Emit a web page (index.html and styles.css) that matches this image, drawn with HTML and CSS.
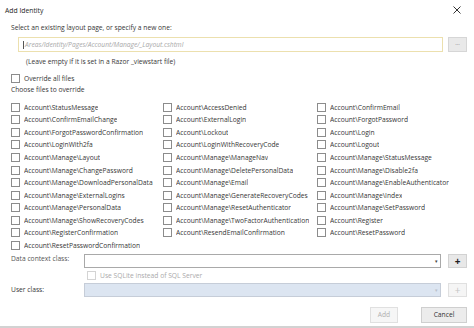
FILE: index.html
```html
<!DOCTYPE html>
<html>
<head>
<meta charset="utf-8">
<link rel="stylesheet" href="styles.css">
</head>
<body>
<div class="dialog">
  <div class="titlebar">
    <span class="title">Add Identity</span>
    <span class="close"><svg width="8" height="8" viewBox="0 0 8 8"><path d="M0.5 0.5L7.5 7.5M7.5 0.5L0.5 7.5" stroke="#333" stroke-width="1" fill="none"/></svg></span>
  </div>
  <div class="body">
    <div class="line prompt">Select an existing layout page, or specify a new one:</div>
    <div class="layout-row">
      <div class="layout-input"><span class="caret"></span><span class="placeholder">Areas/Identity/Pages/Account/Manage/_Layout.cshtml</span></div>
      <div class="browse">...</div>
    </div>
    <div class="line hint">(Leave empty if it is set in a Razor _viewstart file)</div>
    <div class="check-row override"><span class="cb"></span><span>Override all files</span></div>
    <div class="line choose">Choose files to override</div>
    <div class="files">
      <div class="file"><span class="cb"></span><span class="name">Account\StatusMessage</span></div>
      <div class="file"><span class="cb"></span><span class="name">Account\AccessDenied</span></div>
      <div class="file"><span class="cb"></span><span class="name">Account\ConfirmEmail</span></div>
      <div class="file"><span class="cb"></span><span class="name">Account\ConfirmEmailChange</span></div>
      <div class="file"><span class="cb"></span><span class="name">Account\ExternalLogin</span></div>
      <div class="file"><span class="cb"></span><span class="name">Account\ForgotPassword</span></div>
      <div class="file"><span class="cb"></span><span class="name">Account\ForgotPasswordConfirmation</span></div>
      <div class="file"><span class="cb"></span><span class="name">Account\Lockout</span></div>
      <div class="file"><span class="cb"></span><span class="name">Account\Login</span></div>
      <div class="file"><span class="cb"></span><span class="name">Account\LoginWith2fa</span></div>
      <div class="file"><span class="cb"></span><span class="name">Account\LoginWithRecoveryCode</span></div>
      <div class="file"><span class="cb"></span><span class="name">Account\Logout</span></div>
      <div class="file"><span class="cb"></span><span class="name">Account\Manage\Layout</span></div>
      <div class="file"><span class="cb"></span><span class="name">Account\Manage\ManageNav</span></div>
      <div class="file"><span class="cb"></span><span class="name">Account\Manage\StatusMessage</span></div>
      <div class="file"><span class="cb"></span><span class="name">Account\Manage\ChangePassword</span></div>
      <div class="file"><span class="cb"></span><span class="name">Account\Manage\DeletePersonalData</span></div>
      <div class="file"><span class="cb"></span><span class="name">Account\Manage\Disable2fa</span></div>
      <div class="file"><span class="cb"></span><span class="name">Account\Manage\DownloadPersonalData</span></div>
      <div class="file"><span class="cb"></span><span class="name">Account\Manage\Email</span></div>
      <div class="file"><span class="cb"></span><span class="name">Account\Manage\EnableAuthenticator</span></div>
      <div class="file"><span class="cb"></span><span class="name">Account\Manage\ExternalLogins</span></div>
      <div class="file"><span class="cb"></span><span class="name">Account\Manage\GenerateRecoveryCodes</span></div>
      <div class="file"><span class="cb"></span><span class="name">Account\Manage\Index</span></div>
      <div class="file"><span class="cb"></span><span class="name">Account\Manage\PersonalData</span></div>
      <div class="file"><span class="cb"></span><span class="name">Account\Manage\ResetAuthenticator</span></div>
      <div class="file"><span class="cb"></span><span class="name">Account\Manage\SetPassword</span></div>
      <div class="file"><span class="cb"></span><span class="name">Account\Manage\ShowRecoveryCodes</span></div>
      <div class="file"><span class="cb"></span><span class="name">Account\Manage\TwoFactorAuthentication</span></div>
      <div class="file"><span class="cb"></span><span class="name">Account\Register</span></div>
      <div class="file"><span class="cb"></span><span class="name">Account\RegisterConfirmation</span></div>
      <div class="file"><span class="cb"></span><span class="name">Account\ResendEmailConfirmation</span></div>
      <div class="file"><span class="cb"></span><span class="name">Account\ResetPassword</span></div>
      <div class="file"><span class="cb"></span><span class="name">Account\ResetPasswordConfirmation</span></div>
    </div>
    <div class="field-row data-row">
      <span class="field-label">Data context class:</span>
      <div class="combo"><span class="arrow">&#9662;</span></div>
      <div class="plus">+</div>
    </div>
    <div class="check-row sqlite"><span class="cb disabled"></span><span>Use SQLite instead of SQL Server</span></div>
    <div class="field-row user-row">
      <span class="field-label">User class:</span>
      <div class="combo disabled"><span class="arrow">&#9662;</span></div>
      <div class="plus disabled">+</div>
    </div>
    <div class="actions">
      <div class="btn disabled">Add</div>
      <div class="btn">Cancel</div>
    </div>
  </div>
  <div class="bottom-bar"></div>
</div>
</body>
</html>
```
FILE: styles.css
```css
html, body {
  margin: 0;
  padding: 0;
  background: #ffffff;
}
.dialog {
  width: 474px;
  height: 328px;
  position: relative;
  overflow: hidden;
  font-family: "Open Sans", "Liberation Sans", Arial, sans-serif;
  font-size: 6.7px;
  color: #363636;
}
.titlebar {
  height: 20px;
  display: flex;
  align-items: center;
  justify-content: space-between;
  padding: 0 13px 0 5px;
}
.title {
  color: #1e1e1e;
  font-size: 6.8px;
}
.close {
  display: flex;
  align-items: center;
}
.body {
  padding-left: 11px;
}
.line {
  height: 16px;
  line-height: 16px;
  white-space: nowrap;
}
.layout-row {
  display: flex;
  margin-top: 1px;
  height: 15px;
}
.layout-input {
  margin-left: 7px;
  width: 425px;
  height: 15px;
  box-sizing: border-box;
  border: 1px solid #ece0ae;
  display: flex;
  align-items: center;
  padding-left: 4px;
}
.caret {
  width: 1px;
  height: 8px;
  background: #555;
  margin-right: 1px;
}
.placeholder {
  font-style: italic;
  color: #a8a8a8;
}
.browse {
  margin-left: 5px;
  width: 19px;
  height: 15px;
  box-sizing: border-box;
  background: #e9e9e9;
  border: 1px solid #d6d6d6;
  color: #777;
  text-align: center;
  line-height: 11px;
  font-size: 6px;
}
.hint {
  margin-top: 2px;
  padding-left: 15px;
}
.check-row {
  display: flex;
  align-items: center;
  white-space: nowrap;
}
.override {
  height: 12px;
  margin-top: 2px;
}
.choose {
  height: 12px;
  line-height: 12px;
}
.cb {
  flex: none;
  width: 9px;
  height: 9px;
  box-sizing: border-box;
  border: 1px solid #8c8c8c;
  background: #fff;
  margin-right: 4px;
}
.cb.disabled {
  border-color: #d4d4d4;
}
.files {
  margin-top: 5px;
  display: grid;
  grid-template-columns: 152px 154px 1fr;
  grid-auto-rows: 12.55px;
}
.file {
  display: flex;
  align-items: center;
  white-space: nowrap;
  overflow: hidden;
}
.name {
  overflow: hidden;
}
.field-row {
  display: flex;
  align-items: center;
  height: 14px;
}
.data-row {
  margin-top: 2px;
}
.field-label {
  width: 73px;
  color: #555;
  margin-top: -4px;
}
.user-row .field-label {
  margin-top: 0;
  color: #363636;
}
.combo {
  width: 357px;
  height: 14px;
  box-sizing: border-box;
  border: 1px solid #a9a9a9;
  background: #fff;
  display: flex;
  align-items: center;
  justify-content: flex-end;
  padding-right: 2px;
}
.combo .arrow {
  font-size: 5px;
  color: #444;
}
.combo.disabled {
  background: #dce5f1;
  border-color: #c6cdd8;
}
.combo.disabled .arrow {
  color: #b9c0ca;
}
.plus {
  margin-left: 7px;
  width: 19px;
  height: 14px;
  box-sizing: border-box;
  background: #e8e8e8;
  border: 1px solid #d2d2d2;
  text-align: center;
  line-height: 12px;
  font-size: 10px;
  font-weight: bold;
  color: #1e1e1e;
}
.plus.disabled {
  background: #f5f5f5;
  border-color: #e0e0e0;
  color: #c4c4c4;
  font-weight: normal;
}
.sqlite {
  height: 15px;
  padding-left: 76px;
  color: #aaaaaa;
}
.user-row {
  margin-top: 0;
}
.actions {
  display: flex;
  justify-content: flex-end;
  gap: 23px;
  padding-right: 7px;
  margin-top: 10px;
}
.btn {
  height: 16px;
  box-sizing: border-box;
  border: 1px solid #cfcfcf;
  background: #ececec;
  color: #333;
  line-height: 14px;
  text-align: center;
  width: 46px;
}
.btn.disabled {
  width: 28px;
  background: #f6f6f6;
  border-color: #e0e0e0;
  color: #b0b0b0;
}
.bottom-bar {
  position: absolute;
  left: 0;
  right: 0;
  bottom: 0;
  height: 2px;
  background: #d2d2d2;
}
```
